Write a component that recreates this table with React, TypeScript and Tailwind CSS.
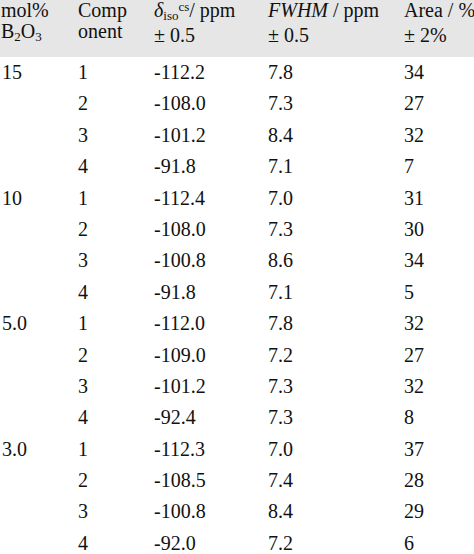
const groups = [
  {
    mol: "15",
    rows: [
      ["1", "-112.2", "7.8", "34"],
      ["2", "-108.0", "7.3", "27"],
      ["3", "-101.2", "8.4", "32"],
      ["4", "-91.8", "7.1", "7"],
    ],
  },
  {
    mol: "10",
    rows: [
      ["1", "-112.4", "7.0", "31"],
      ["2", "-108.0", "7.3", "30"],
      ["3", "-100.8", "8.6", "34"],
      ["4", "-91.8", "7.1", "5"],
    ],
  },
  {
    mol: "5.0",
    rows: [
      ["1", "-112.0", "7.8", "32"],
      ["2", "-109.0", "7.2", "27"],
      ["3", "-101.2", "7.3", "32"],
      ["4", "-92.4", "7.3", "8"],
    ],
  },
  {
    mol: "3.0",
    rows: [
      ["1", "-112.3", "7.0", "37"],
      ["2", "-108.5", "7.4", "28"],
      ["3", "-100.8", "8.4", "29"],
      ["4", "-92.0", "7.2", "6"],
    ],
  },
];

const cols = "grid grid-cols-[78px_76px_114px_136px_1fr]";

export default function App() {
  return (
    <div className="w-[474px] h-[554px] overflow-hidden bg-white text-[20px] text-[#111] font-['Liberation_Serif','Times_New_Roman',serif]">
      <div className={`${cols} h-[57px] bg-[#e6e6e6] leading-[21px] whitespace-nowrap`}>
        <div className="pl-px">
          <div>mol%</div>
          <div>
            B<sub className="text-[13px]">2</sub>O<sub className="text-[13px]">3</sub>
          </div>
        </div>
        <div>
          <div>Comp</div>
          <div>onent</div>
        </div>
        <div>
          <div>
            <i>δ</i>
            <sub className="text-[13px]">iso</sub>
            <sup className="text-[13px]">cs</sup>/ ppm
          </div>
          <div className="mt-1">± 0.5</div>
        </div>
        <div>
          <div>
            <i>FWHM</i> / ppm
          </div>
          <div className="mt-1">± 0.5</div>
        </div>
        <div>
          <div>Area / %</div>
          <div className="mt-1">± 2%</div>
        </div>
      </div>
      {groups.map((g) =>
        g.rows.map((r, i) => (
          <div key={g.mol + i} className={`${cols} h-[31.4px] leading-[31.4px]`}>
            <div className="pl-0.5">{i === 0 ? g.mol : ""}</div>
            {r.map((c, j) => (
              <div key={j}>{c}</div>
            ))}
          </div>
        ))
      )}
    </div>
  );
}
